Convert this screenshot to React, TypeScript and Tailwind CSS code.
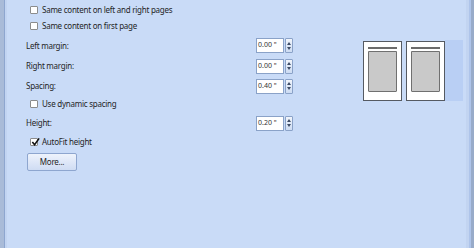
import type { ReactNode } from "react";

function Box({ checked = false }: { checked?: boolean }) {
  return (
    <span className="relative flex h-[8px] w-[8px] shrink-0 items-center justify-center rounded-[1px] border border-[#8c8c8c] bg-white">
      {checked ? (
        <svg viewBox="0 0 10 10" className="absolute left-[0px] top-[-2px] h-[9px] w-[9px]">
          <path d="M1.5 5.5 L4 8.5 L9 1.5" fill="none" stroke="#111" strokeWidth="1.8" />
        </svg>
      ) : null}
    </span>
  );
}

function CheckRow({ label, checked, h }: { label: string; checked?: boolean; h: string }) {
  return (
    <div className={`flex items-center gap-[4px] pl-[23px] ${h}`}>
      <Box checked={checked} />
      <span>{label}</span>
    </div>
  );
}

function Spin({ value }: { value: string }) {
  return (
    <div className="flex h-[15px] w-[37px]">
      <div className="flex w-[28px] items-center border border-[#8aa2c8] bg-white pl-[1px] text-[7px] tracking-normal text-[#333]">
        {value}
      </div>
      <div className="ml-[1px] flex w-[8px] flex-col items-center justify-center gap-[2px] rounded-[1px] border border-[#8aa2c8] bg-gradient-to-b from-[#f1f5fc] to-[#cddcf3]">
        <svg viewBox="0 0 4 3" className="h-[3px] w-[4px]">
          <path d="M0 3 L2 0 L4 3 Z" fill="#3d4c66" />
        </svg>
        <svg viewBox="0 0 4 3" className="h-[3px] w-[4px]">
          <path d="M0 0 L2 3 L4 0 Z" fill="#3d4c66" />
        </svg>
      </div>
    </div>
  );
}

function FieldRow({ label, value, h }: { label: string; value: string; h: string }) {
  return (
    <div className={`flex items-center ${h}`}>
      <span className="w-[249px] pl-[19px]">{label}</span>
      <Spin value={value} />
    </div>
  );
}

function Page() {
  return (
    <div className="flex h-[60px] w-[39px] flex-col items-center border border-[#555a62] bg-white pt-[5px]">
      <div className="h-[2px] w-[29px] bg-[#6b6b6b]" />
      <div className="mt-[2px] h-[41px] w-[29px] rounded-b-[1px] border border-[#707070] bg-[#c9c9c9]" />
    </div>
  );
}

function Row({ children, h }: { children: ReactNode; h: string }) {
  return <div className={`flex items-center ${h}`}>{children}</div>;
}

export default function App() {
  return (
    <div
      className="flex h-[248px] w-[474px] bg-[#c9dbf7] text-[8px] tracking-[-0.25px] text-[#1f1f1f]"
      style={{ fontFamily: '"Noto Sans", "Open Sans", sans-serif' }}
    >
      <div className="w-[4px] bg-[#a9bbd8]" />
      <div className="w-[1px] bg-[#8ea6cf]" />
      <div className="w-[2px] bg-[#c2d4f1]" />
      <div className="flex flex-1">
        <div className="flex w-[286px] flex-col pt-[2px]">
          <CheckRow h="h-[16px]" label="Same content on left and right pages" />
          <CheckRow h="h-[16px]" label="Same content on first page" />
          <FieldRow h="h-[22px] pt-[1px]" label="Left margin:" value={'0.00 "'} />
          <FieldRow h="h-[20px]" label="Right margin:" value={'0.00 "'} />
          <FieldRow h="h-[20px]" label="Spacing:" value={'0.40 "'} />
          <CheckRow h="h-[16px]" label="Use dynamic spacing" />
          <FieldRow h="h-[22px]" label="Height:" value={'0.20 "'} />
          <CheckRow h="h-[16px]" checked label="AutoFit height" />
          <Row h="h-[18px] mt-[3px] pl-[20px]">
            <button className="flex h-[18px] w-[50px] items-center justify-center rounded-[2px] border border-[#8ea6cf] bg-gradient-to-b from-[#eef3fc] to-[#cfdcf3] text-[8px] text-[#1f1f1f]">
              More...
            </button>
          </Row>
        </div>
        <div className="ml-[70px] flex pt-[40px]">
          <div className="flex h-[61px] gap-[4px] pt-[1px]">
            <Page />
            <Page />
          </div>
          <div className="h-[61px] w-[18px] bg-[#b9cff4]" />
        </div>
      </div>
      <div className="w-[3px] bg-[#c2d4f1]" />
      <div className="w-[2px] bg-[#aec4ea]" />
      <div className="w-[3px] bg-[#98abc9]" />
    </div>
  );
}
